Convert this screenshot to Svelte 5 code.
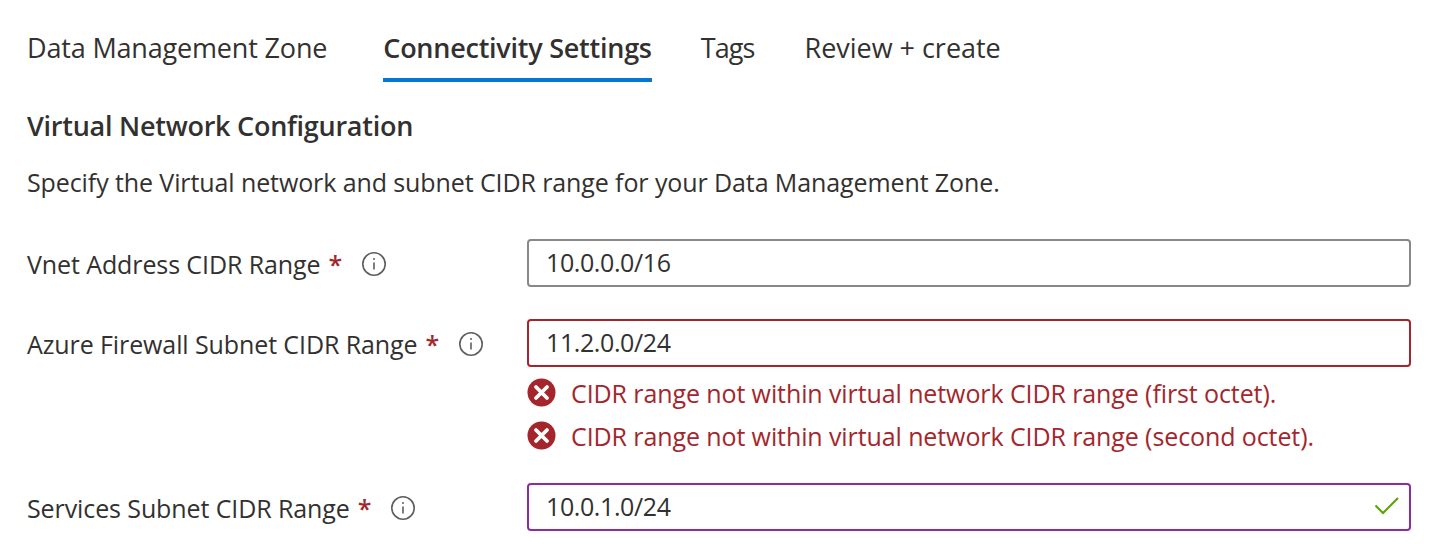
<script>
  const tabs = [
    { label: 'Data Management Zone' },
    { label: 'Connectivity Settings', active: true },
    { label: 'Tags' },
    { label: 'Review + create' }
  ];

  const rows = [
    { label: 'Vnet Address CIDR Range', value: '10.0.0.0/16', state: '', errors: [] },
    {
      label: 'Azure Firewall Subnet CIDR Range',
      value: '11.2.0.0/24',
      state: 'invalid',
      errors: [
        'CIDR range not within virtual network CIDR range (first octet).',
        'CIDR range not within virtual network CIDR range (second octet).'
      ]
    },
    { label: 'Services Subnet CIDR Range', value: '10.0.1.0/24', state: 'valid', errors: [] }
  ];
</script>

<style>
  :global(body) {
    background: #fff;
    overflow: hidden;
  }

  .page {
    width: 1439px;
    height: 549px;
    padding: 0 28px 0 27px;
    box-sizing: border-box;
    overflow: hidden;
    font-family: "Open Sans", "Noto Sans", sans-serif;
    font-size: 25px;
    letter-spacing: -0.1px;
    color: #323130;
  }

  .tabs {
    display: flex;
    gap: 50px;
    height: 82px;
  }

  .tab {
    height: 82px;
    box-sizing: border-box;
    padding-top: 30px;
    line-height: 36px;
    font-size: 27px;
    letter-spacing: -0.17px;
  }

  .tab.active {
    font-weight: 600;
    letter-spacing: -0.25px;
    border-bottom: 4px solid #0078d4;
    margin-left: 6px;
    margin-right: -1px;
  }

  .tab:nth-child(3) {
    letter-spacing: -0.9px;
  }

  .tab:last-child {
    letter-spacing: -0.03px;
  }

  h2 {
    margin: 26px 0 0;
    font-size: 27px;
    letter-spacing: -0.25px;
    font-weight: 600;
    line-height: 36px;
  }

  .desc {
    margin: 20px 0 0;
    line-height: 36px;
  }

  .form {
    margin-top: 39px;
    display: flex;
    flex-direction: column;
    gap: 32px;
  }

  .row {
    display: flex;
  }

  .label {
    width: 500px;
    flex: none;
    height: 48px;
    box-sizing: border-box;
    padding-top: 2px;
    display: flex;
    align-items: center;
  }

  .req {
    color: #a4262c;
    margin-left: 8px;
    font-weight: 600;
  }

  .info {
    margin-left: 18.5px;
    display: block;
  }

  .field {
    flex: 1;
  }

  .input {
    height: 48px;
    box-sizing: border-box;
    border: 2px solid #8a8886;
    border-radius: 4px;
    padding: 0 9px 2px 17px;
    display: flex;
    align-items: center;
    justify-content: space-between;
    letter-spacing: -0.4px;
  }

  .input.invalid {
    border-color: #a4262c;
  }

  .input.valid {
    border-color: #8a2da5;
  }

  .errors {
    padding-top: 4px;
    margin-bottom: -6px;
  }

  .error {
    display: flex;
    align-items: center;
    height: 43px;
    color: #a4262c;
    gap: 15px;
  }

  svg {
    flex: none;
  }
</style>

<div class="page">
  <div class="tabs">
    {#each tabs as tab}
      <div class="tab" class:active={tab.active}>{tab.label}</div>
    {/each}
  </div>

  <h2>Virtual Network Configuration</h2>
  <p class="desc">Specify the Virtual network and subnet CIDR range for your Data Management Zone.</p>

  <div class="form">
    {#each rows as row}
      <div class="row">
        <div class="label">
          <span>{row.label}</span>
          <span class="req">*</span>
          <svg class="info" width="26" height="26" viewBox="0 0 26 26" fill="none" stroke="#605e5c" stroke-width="1.6">
            <circle cx="13" cy="13" r="11.2" />
            <path d="M13 11.5v7" />
            <circle cx="13" cy="8" r="1" fill="#605e5c" stroke="none" />
          </svg>
        </div>
        <div class="field">
          <div class="input {row.state}">
            <span>{row.value}</span>
            {#if row.state === 'valid'}
              <svg width="26" height="20" viewBox="0 0 26 20" fill="none" stroke="#57a300" stroke-width="2">
                <path d="M1.5 9.5 L9 17 L24 2" />
              </svg>
            {/if}
          </div>
          {#if row.errors.length}
            <div class="errors">
              {#each row.errors as msg}
                <div class="error">
                  <svg width="29" height="29" viewBox="0 0 29 29">
                    <circle cx="14.5" cy="14.5" r="14" fill="#a4262c" />
                    <path d="M9 9 L20 20 M20 9 L9 20" stroke="#fff" stroke-width="3.8" stroke-linecap="round" />
                  </svg>
                  <span>{msg}</span>
                </div>
              {/each}
            </div>
          {/if}
        </div>
      </div>
    {/each}
  </div>
</div>
